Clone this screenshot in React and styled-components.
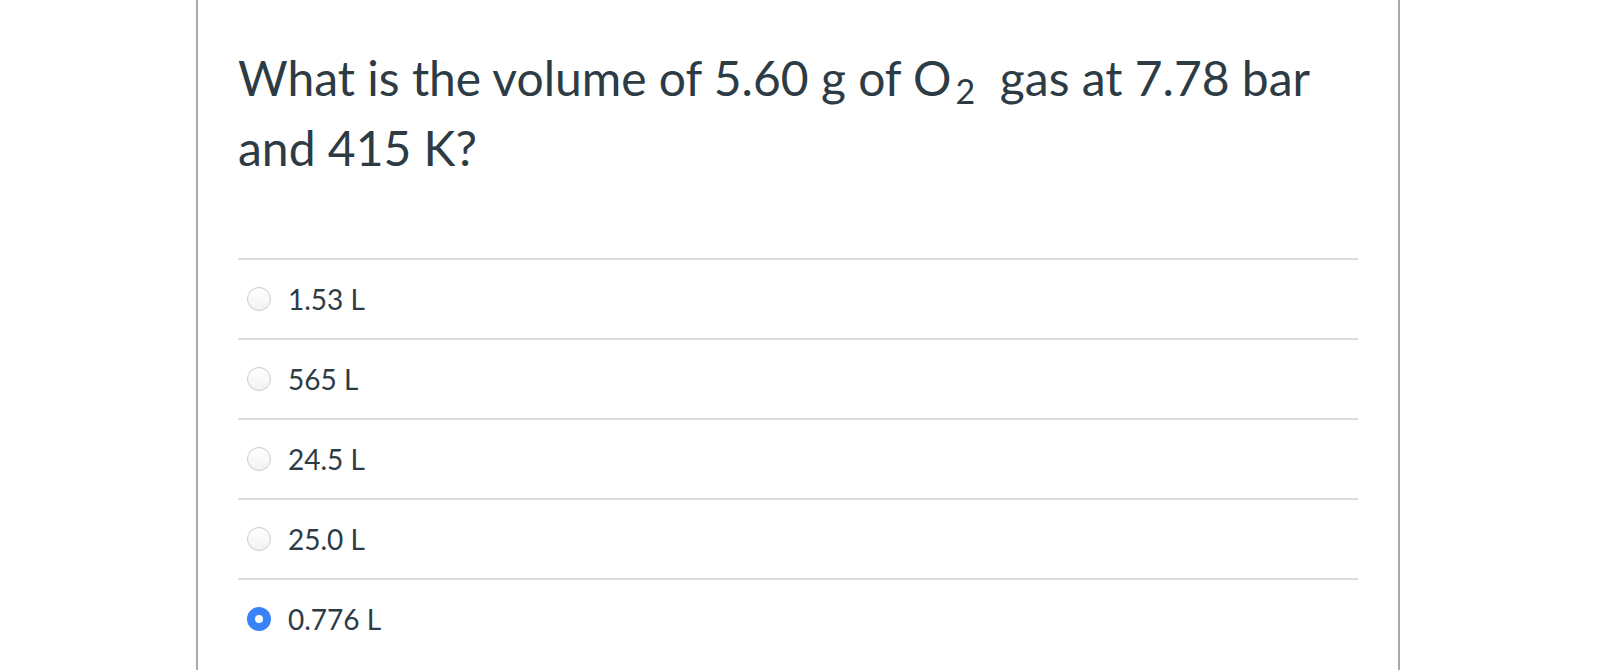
import React, { useState } from "react";
import styled, { createGlobalStyle } from "styled-components";

const GlobalStyle = createGlobalStyle`
  html, body {
    margin: 0;
    padding: 0;
    background: #ffffff;
    overflow: hidden;
  }
  body {
    font-family: "Lato", "Open Sans", sans-serif;
    color: #2d3b45;
  }
`;

const answers = [
  { id: "a", label: "1.53 L" },
  { id: "b", label: "565 L" },
  { id: "c", label: "24.5 L" },
  { id: "d", label: "25.0 L" },
  { id: "e", label: "0.776 L" },
];

function App() {
  const [selected, setSelected] = useState("e");

  return (
    <>
      <GlobalStyle />
      <Page>
        <QuestionCard>
          <QuestionText>
            What is the volume of 5.60 g of O<Sub>2</Sub>&nbsp; gas at 7.78 bar
            and 415 K?
          </QuestionText>
          <AnswerList>
            {answers.map((answer) => (
              <AnswerRow key={answer.id} onClick={() => setSelected(answer.id)}>
                <Radio checked={selected === answer.id} />
                <AnswerLabel>{answer.label}</AnswerLabel>
              </AnswerRow>
            ))}
          </AnswerList>
        </QuestionCard>
      </Page>
    </>
  );
}

export default App;

const Page = styled.div`
  height: 670px;
  display: flex;
  padding-left: 196px;
`;

const QuestionCard = styled.div`
  width: 1204px;
  height: 670px;
  box-sizing: border-box;
  padding: 43px 40px 0;
  border-left: 2px solid #a9a9a9;
  border-right: 2px solid #a9a9a9;
`;

const QuestionText = styled.div`
  font-size: 48px;
  line-height: 70px;
  font-weight: 400;
  color: #2d3b45;
`;

const Sub = styled.span`
  font-size: 34px;
  position: relative;
  top: 8px;
  line-height: 0;
  margin-left: 4px;
`;

const AnswerList = styled.div`
  margin-top: 75px;
  display: flex;
  flex-direction: column;
`;

const AnswerRow = styled.label`
  display: flex;
  align-items: center;
  height: 78px;
  border-top: 2px solid #dddddd;
  padding-left: 9px;
  cursor: pointer;
`;

const Radio = styled.span`
  width: 24px;
  height: 24px;
  border-radius: 50%;
  box-sizing: border-box;
  flex-shrink: 0;
  border: ${({ checked }) =>
    checked ? "8px solid #3a83f7" : "1px solid #c9c9c9"};
  background: ${({ checked }) =>
    checked ? "#ffffff" : "linear-gradient(#ffffff, #f2f2f2)"};
`;

const AnswerLabel = styled.span`
  margin-left: 17px;
  font-size: 28px;
  line-height: 32px;
  color: #2d3b45;
`;
